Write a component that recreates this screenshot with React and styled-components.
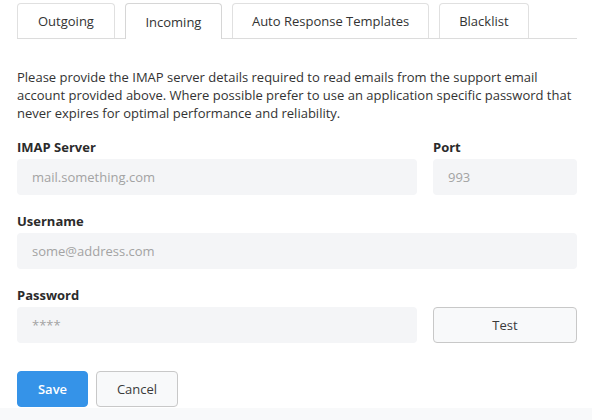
import React from "react";
import styled, { createGlobalStyle } from "styled-components";

const Global = createGlobalStyle`
  html, body { margin: 0; padding: 0; background: #f8f9fa; }
  body { font-family: "Open Sans", "Liberation Sans", sans-serif; color: #333; }
`;

const Page = styled.div`
  background: #fff;
  padding: 3px 15px 1px 17px;
  height: 404px;
`;

const Tabs = styled.div`
  display: flex;
  gap: 10px;
  border-bottom: 1px solid #dcdcdc;
  height: 35px;
`;

const Tab = styled.div`
  height: 35px;
  box-sizing: border-box;
  padding: 0 ${(p) => p.$pad}px;
  display: flex;
  align-items: center;
  justify-content: center;
  font-size: 13px;
  color: #333;
  border: 1px solid #e0e0e0;
  border-bottom: none;
  border-radius: 4px 4px 0 0;
  background: #fff;
  ${(p) => (p.$active ? "height: 36px; border-color: #d6d6d6;" : "")}
`;

const Intro = styled.p`
  margin: 29px 0 16px;
  font-size: 13px;
  line-height: 18px;
  color: #333;
`;

const Grid = styled.div`
  display: grid;
  grid-template-columns: 400px 144px;
  column-gap: 16px;
  row-gap: 17px;
`;

const Field = styled.div`
  display: flex;
  flex-direction: column;
  gap: 3px;
  grid-column: ${(p) => p.$span || "auto"};
`;

const Label = styled.div`
  font-size: 13px;
  font-weight: 700;
  line-height: 18px;
  color: #2b2b2b;
  min-height: 18px;
`;

const Input = styled.input`
  height: 36px;
  box-sizing: border-box;
  border: none;
  border-radius: 4px;
  background: #f4f5f7;
  padding: 0 15px;
  font-family: inherit;
  font-size: 13px;
  color: #333;
  outline: none;
  &::placeholder { color: #a3a3a3; }
`;

const Button = styled.button`
  height: 36px;
  box-sizing: border-box;
  border-radius: 4px;
  font-family: inherit;
  font-size: 13px;
  cursor: pointer;
  padding: 0;
  width: ${(p) => p.$w || "auto"};
  ${(p) =>
    p.$primary
      ? "background: #3593e8; color: #fff; border: 1px solid #3593e8; font-weight: 600;"
      : "background: #f8f9fa; color: #3a3a3a; border: 1px solid #c8c8c8;"}
`;

const Actions = styled.div`
  display: flex;
  gap: 8px;
  margin-top: 28px;
`;

export default function App() {
  return (
    <>
      <Global />
      <Page>
        <Tabs>
          <Tab $pad={20}>Outgoing</Tab>
          <Tab $pad={19.5} $active>Incoming</Tab>
          <Tab $pad={19}>Auto Response Templates</Tab>
          <Tab $pad={19}>Blacklist</Tab>
        </Tabs>
        <Intro>
          Please provide the IMAP server details required to read emails from the support email
          account provided above. Where possible prefer to use an application specific password
          that never expires for optimal performance and reliability.
        </Intro>
        <Grid>
          <Field>
            <Label>IMAP Server</Label>
            <Input placeholder="mail.something.com" />
          </Field>
          <Field>
            <Label>Port</Label>
            <Input placeholder="993" />
          </Field>
          <Field $span="1 / 3">
            <Label>Username</Label>
            <Input placeholder="some@address.com" />
          </Field>
          <Field>
            <Label>Password</Label>
            <Input placeholder="****" type="text" />
          </Field>
          <Field>
            <Label />
            <Button>Test</Button>
          </Field>
        </Grid>
        <Actions>
          <Button $primary $w="71px">Save</Button>
          <Button $w="82px">Cancel</Button>
        </Actions>
      </Page>
    </>
  );
}
